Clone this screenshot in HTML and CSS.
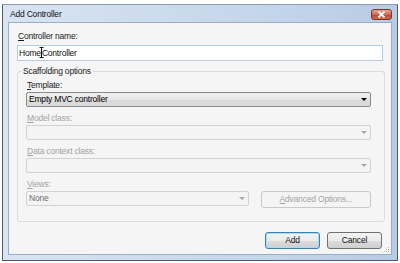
FILE: index.html
```html
<!DOCTYPE html>
<html lang="en">
<head>
    <meta charset="UTF-8">
    <title>Add Controller</title>
    <link rel="stylesheet" href="styles.css">
</head>
<body>
    <div class="window">
        <div class="titlebar">
            <span class="title">Add Controller</span>
            <span class="close">
                <svg width="9" height="7" viewBox="0 0 9 7"><path d="M1.5 0.5 L7.5 6.5 M7.5 0.5 L1.5 6.5" stroke="#fff" stroke-width="1.8"/></svg>
            </span>
        </div>

        <div class="client">
            <div class="lbl"><u>C</u>ontroller name:</div>
            <div class="textbox">Home<svg class="ibeam" width="5" height="11" viewBox="0 0 5 11"><path d="M0.5 0.5 H4.5 M2.5 0.5 V10.5 M0.5 10.5 H4.5" stroke="#111" stroke-width="1" fill="none"/></svg>Controller</div>

            <fieldset class="group">
                <legend>Scaffolding options</legend>

                <div class="lbl"><u>T</u>emplate:</div>
                <div class="combo active">
                    <span>Empty MVC controller</span>
                    <i class="arrow"></i>
                </div>

                <div class="lbl off"><u>M</u>odel class:</div>
                <div class="combo off"><span></span><i class="arrow"></i></div>

                <div class="lbl off"><u>D</u>ata context class:</div>
                <div class="combo off"><span></span><i class="arrow"></i></div>

                <div class="lbl off"><u>V</u>iews:</div>
                <div class="row">
                    <div class="combo off views"><span>None</span><i class="arrow"></i></div>
                    <div class="btn off adv"><u>A</u>dvanced Options...</div>
                </div>
            </fieldset>

            <div class="actions">
                <div class="btn default">Add</div>
                <div class="btn">Cancel</div>
            </div>

            <svg class="grip" width="6" height="6" viewBox="0 0 6 6">
                <rect x="4" y="0" width="1" height="1" fill="#b8b8b8"/>
                <rect x="2" y="2" width="1" height="1" fill="#b8b8b8"/>
                <rect x="4" y="2" width="1" height="1" fill="#b8b8b8"/>
                <rect x="0" y="4" width="1" height="1" fill="#b8b8b8"/>
                <rect x="2" y="4" width="1" height="1" fill="#b8b8b8"/>
                <rect x="4" y="4" width="1" height="1" fill="#b8b8b8"/>
            </svg>
        </div>
    </div>
</body>
</html>
```

FILE: styles.css
```css
body {
    margin: 0;
    background: #fff;
    font-family: "Liberation Sans", Arial, sans-serif;
    font-size: 8.5px;
    letter-spacing: -0.2px;
    color: #1b1b1b;
}
u { text-decoration: underline; text-underline-offset: 1px; }

.window {
    margin: 4px 0 0 2px;
    width: 394px;
    border: 1px solid #4f5c6b;
    border-top-color: #8e9cad;
    background: linear-gradient(90deg, #d8e4f2, #c3d5ea 70%, #b6cbe4);
}

/* title bar */
.titlebar {
    display: flex;
    justify-content: space-between;
    align-items: flex-start;
    height: 17px;
}
.title {
    padding: 1px 0 0 7px;
    line-height: 16px;
    color: #111;
}
.close {
    margin: 4px 5px 0 0;
    width: 19px;
    height: 9px;
    border: 1px solid #7d3325;
    border-radius: 3px;
    background: linear-gradient(#e3a595, #d06a55 50%, #c2432c 51%, #d06b4f);
    display: flex;
    align-items: center;
    justify-content: center;
}
.close svg { display: block; }

/* client area */
.client {
    position: relative;
    margin: 0 5px 5px 5px;
    border: 1px solid #9aadc4;
    background: #f5f5f5;
    padding: 8px 8px 5px 8px;
}
.lbl {
    line-height: 11px;
    height: 11px;
    padding-left: 1px;
    white-space: nowrap;
}
.lbl.off { color: #a3a3a3; }

.textbox {
    margin-top: 3px;
    height: 14px;
    border: 1px solid #b3cde6;
    background: #fff;
    line-height: 14px;
    padding-left: 1px;
    color: #111;
    white-space: nowrap;
}
.ibeam {
    vertical-align: -2px;
    margin: 0 -2px;
}

/* group box */
.group {
    margin: 5px 0 0 0;
    padding: 3px 13px 13px 8px;
    border: 1px solid #dcdcdc;
    border-radius: 3px;
}
.group legend {
    margin-left: -4px;
    padding: 0 1px;
    line-height: 11px;
    color: #222;
}
.group .lbl + .combo,
.group .lbl + .row { margin-top: 1px; }
.group .combo + .lbl { margin-top: 6px; }

.combo {
    display: flex;
    align-items: center;
    justify-content: space-between;
    height: 13px;
    border: 1px solid #a9a9a9;
    border-radius: 2px;
    padding: 0 3px 0 2px;
    line-height: 13px;
}
.combo.active {
    border-color: #8a8a8a;
    background: linear-gradient(#f1f1f1, #e6e6e6 50%, #d9d9d9 51%, #dcdcdc);
    color: #000;
}
.combo.off {
    border-color: #d2d2d2;
    background: #f4f4f4;
}
.combo.views span { color: #6e6e6e; }
.arrow {
    width: 0;
    height: 0;
    border-left: 3px solid transparent;
    border-right: 3px solid transparent;
    border-top: 3px solid #000;
}
.combo.off .arrow { border-top-color: #a8a8a8; }

.row {
    display: flex;
    gap: 12px;
}
.views { width: 216px; }

/* buttons */
.btn {
    height: 15px;
    border: 1px solid #707070;
    border-radius: 3px;
    background: linear-gradient(#f3f3f3, #ebebeb 50%, #dddddd 51%, #cfcfcf);
    text-align: center;
    line-height: 15px;
    color: #111;
}
.btn.off {
    border-color: #c9c9c9;
    background: #f4f4f4;
    color: #a5a5a5;
}
.adv { width: 108px; }

.actions {
    display: flex;
    justify-content: flex-end;
    gap: 7px;
    margin: 10px 1px 0 0;
}
.actions .btn { width: 53px; }
.btn.default {
    border-color: #3c7fb1;
    box-shadow: inset 0 0 0 1px #a8dcf5;
}

.grip {
    position: absolute;
    right: 1px;
    bottom: 1px;
}
```
